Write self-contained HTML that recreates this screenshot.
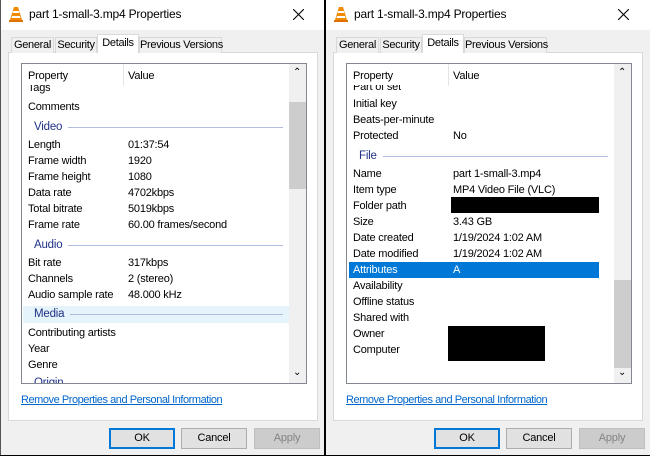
<!DOCTYPE html>
<html><head><style>
*{margin:0;padding:0;box-sizing:border-box}
body{width:650px;height:456px;background:#000;position:relative;overflow:hidden;font-family:"Liberation Sans",sans-serif;font-size:11px;color:#000;letter-spacing:-0.2px}
.w{position:absolute;top:0;width:324px;height:455px;background:#f0f0f0}
.a{position:absolute;white-space:nowrap}
.tb{position:absolute;left:0;top:0;width:100%;height:30px;background:#fff}
.tab{position:absolute;top:37px;height:16px;border:1px solid #d9d9d9;border-bottom:none;background:#f0f0f0;font-size:11px;text-align:center;line-height:14px;white-space:nowrap;letter-spacing:-0.3px}
.panel{position:absolute;left:7px;top:52px;width:310px;height:369px;background:#fff;border:1px solid #d9d9d9}
.list{position:absolute;left:20px;top:63px;width:286px;height:321px;border:1px solid #828790;background:#fff;overflow:hidden}
.sb{position:absolute;right:0;top:0;width:17px;height:319px;background:#f0f0f0}
.th{position:absolute;left:0;width:17px;background:#cdcdcd}
.r{position:absolute;left:6px;height:16px;line-height:16px;white-space:nowrap}
.v{position:absolute;left:100px}
.g{position:absolute;left:6px;height:18px;line-height:18px;color:#1e3287;font-size:11.5px;width:255px;padding-left:6px;display:flex;align-items:center}
.g:after{content:"";flex:1;height:1px;background:#b0bde0;margin-left:6px}
.g.n:after{display:none}
.btn{position:absolute;top:428px;width:66px;height:21px;border:1px solid #adadad;background:#e1e1e1;text-align:center;line-height:19px}
.lnk{position:absolute;left:20px;top:394px;color:#0066cc;text-decoration:underline;letter-spacing:-0.45px}
</style></head><body>

<!-- LEFT -->
<div class="w" style="left:0;border-left:1px solid #555">
<div class="tb"></div>
<svg class="a" style="left:8px;top:6px" width="14" height="16" viewBox="0 0 14 16"><path d="M5 1h4l4 13H1z" fill="#f08a00"/><path d="M4.2 5h5.6l.6 2H3.6zM3 10h8l.6 2H2.4z" fill="#fff"/><rect x="0" y="14" width="14" height="2" fill="#e07000"/></svg>
<div class="a" style="left:28px;top:7px;font-size:12px">part 1-small-3.mp4 Properties</div>
<svg class="a" style="left:292px;top:9px" width="11" height="11"><path d="M0 0L11 11M11 0L0 11" stroke="#000" stroke-width="1.1"/></svg>
<div class="panel"></div>
<div class="tab" style="left:10px;width:43px">General</div>
<div class="tab" style="left:54px;width:42px">Security</div>
<div class="tab" style="left:138px;width:83px">Previous Versions</div>
<div class="tab" style="left:96px;top:34px;width:42px;height:19px;background:#fff;border-color:#d9d9d9;line-height:16px">Details</div>
<div class="list">
 <div class="r" style="top:4px">Property</div><div class="a" style="left:101px;top:0;width:1px;height:22px;background:#e5e5e5"></div>
 <div class="r" style="top:4px;left:106px">Value</div><div class="a" style="left:269px;top:0;width:1px;height:22px;background:#e5e5e5"></div>
 <div class="r" style="top:21px;height:10px;overflow:hidden;line-height:6px">Tags</div>
 <div class="r" style="top:35px">Comments</div>
 <div class="g" style="top:54px">Video</div>
 <div class="r" style="top:73px">Length<span class="v">01:37:54</span></div>
 <div class="r" style="top:89px">Frame width<span class="v">1920</span></div>
 <div class="r" style="top:105px">Frame height<span class="v">1080</span></div>
 <div class="r" style="top:121px">Data rate<span class="v">4702kbps</span></div>
 <div class="r" style="top:137px">Total bitrate<span class="v">5019kbps</span></div>
 <div class="r" style="top:153px">Frame rate<span class="v">60.00 frames/second</span></div>
 <div class="g" style="top:172px">Audio</div>
 <div class="r" style="top:191px">Bit rate<span class="v">317kbps</span></div>
 <div class="r" style="top:207px">Channels<span class="v">2 (stereo)</span></div>
 <div class="r" style="top:223px">Audio sample rate<span class="v">48.000 kHz</span></div>
 <div class="a" style="left:1px;top:242px;width:266px;height:17px;background:#e5f3fb"></div>
 <div class="g" style="top:241px">Media</div>
 <div class="r" style="top:261px">Contributing artists</div>
 <div class="r" style="top:277px">Year</div>
 <div class="r" style="top:293px">Genre</div>
 <div class="g n" style="top:310px">Origin</div>
 <div class="sb"><div class="a" style="left:4px;top:3px;font-size:10px">&#8963;</div><div class="th" style="top:38px;height:87px"></div><div class="a" style="left:4px;top:303px;font-size:10px">&#8964;</div></div>
</div>
<div class="lnk">Remove Properties and Personal Information</div>
<div class="btn" style="left:108px;border:2px solid #0078d7;line-height:17px">OK</div>
<div class="btn" style="left:180px">Cancel</div>
<div class="btn" style="left:253px;background:#ccc;border-color:#bfbfbf;color:#838383">Apply</div>
</div>

<!-- RIGHT -->
<div class="w" style="left:326px;width:324px">
<div class="tb"></div>
<svg class="a" style="left:8px;top:6px" width="14" height="16" viewBox="0 0 14 16"><path d="M5 1h4l4 13H1z" fill="#f08a00"/><path d="M4.2 5h5.6l.6 2H3.6zM3 10h8l.6 2H2.4z" fill="#fff"/><rect x="0" y="14" width="14" height="2" fill="#e07000"/></svg>
<div class="a" style="left:28px;top:7px;font-size:12px">part 1-small-3.mp4 Properties</div>
<svg class="a" style="left:292px;top:9px" width="11" height="11"><path d="M0 0L11 11M11 0L0 11" stroke="#000" stroke-width="1.1"/></svg>
<div class="panel"></div>
<div class="tab" style="left:10px;width:43px">General</div>
<div class="tab" style="left:54px;width:42px">Security</div>
<div class="tab" style="left:138px;width:83px">Previous Versions</div>
<div class="tab" style="left:96px;top:34px;width:42px;height:19px;background:#fff;line-height:16px">Details</div>
<div class="list">
 <div class="r" style="top:4px">Property</div><div class="a" style="left:101px;top:0;width:1px;height:22px;background:#e5e5e5"></div>
 <div class="r" style="top:4px;left:106px">Value</div><div class="a" style="left:269px;top:0;width:1px;height:22px;background:#e5e5e5"></div>
 <div class="r" style="top:21px;height:7px;overflow:hidden;line-height:4px">Part of set</div>
 <div class="r" style="top:32px">Initial key</div>
 <div class="r" style="top:48px">Beats-per-minute</div>
 <div class="r" style="top:64px">Protected<span class="v">No</span></div>
 <div class="g" style="top:83px">File</div>
 <div class="r" style="top:102px">Name<span class="v">part 1-small-3.mp4</span></div>
 <div class="r" style="top:118px">Item type<span class="v">MP4 Video File (VLC)</span></div>
 <div class="r" style="top:134px">Folder path</div>
 <div class="a" style="left:104px;top:133px;width:148px;height:16px;background:#000"></div>
 <div class="r" style="top:150px">Size<span class="v">3.43 GB</span></div>
 <div class="r" style="top:166px">Date created<span class="v">1/19/2024 1:02 AM</span></div>
 <div class="r" style="top:182px">Date modified<span class="v">1/19/2024 1:02 AM</span></div>
 <div class="a" style="left:2px;top:198px;width:250px;height:16px;background:#0078d7"></div>
 <div class="r" style="top:198px;color:#fff">Attributes<span class="v">A</span></div>
 <div class="r" style="top:214px">Availability</div>
 <div class="r" style="top:230px">Offline status</div>
 <div class="r" style="top:246px">Shared with</div>
 <div class="r" style="top:262px">Owner</div>
 <div class="r" style="top:278px">Computer</div>
 <div class="a" style="left:101px;top:262px;width:97px;height:35px;background:#000"></div>
 <div class="sb"><div class="a" style="left:4px;top:3px;font-size:10px">&#8963;</div><div class="th" style="top:216px;height:88px"></div><div class="a" style="left:4px;top:303px;font-size:10px">&#8964;</div></div>
</div>
<div class="lnk">Remove Properties and Personal Information</div>
<div class="btn" style="left:108px;border:2px solid #0078d7;line-height:17px">OK</div>
<div class="btn" style="left:180px">Cancel</div>
<div class="btn" style="left:253px;background:#ccc;border-color:#bfbfbf;color:#838383">Apply</div>
</div>
</body></html>
